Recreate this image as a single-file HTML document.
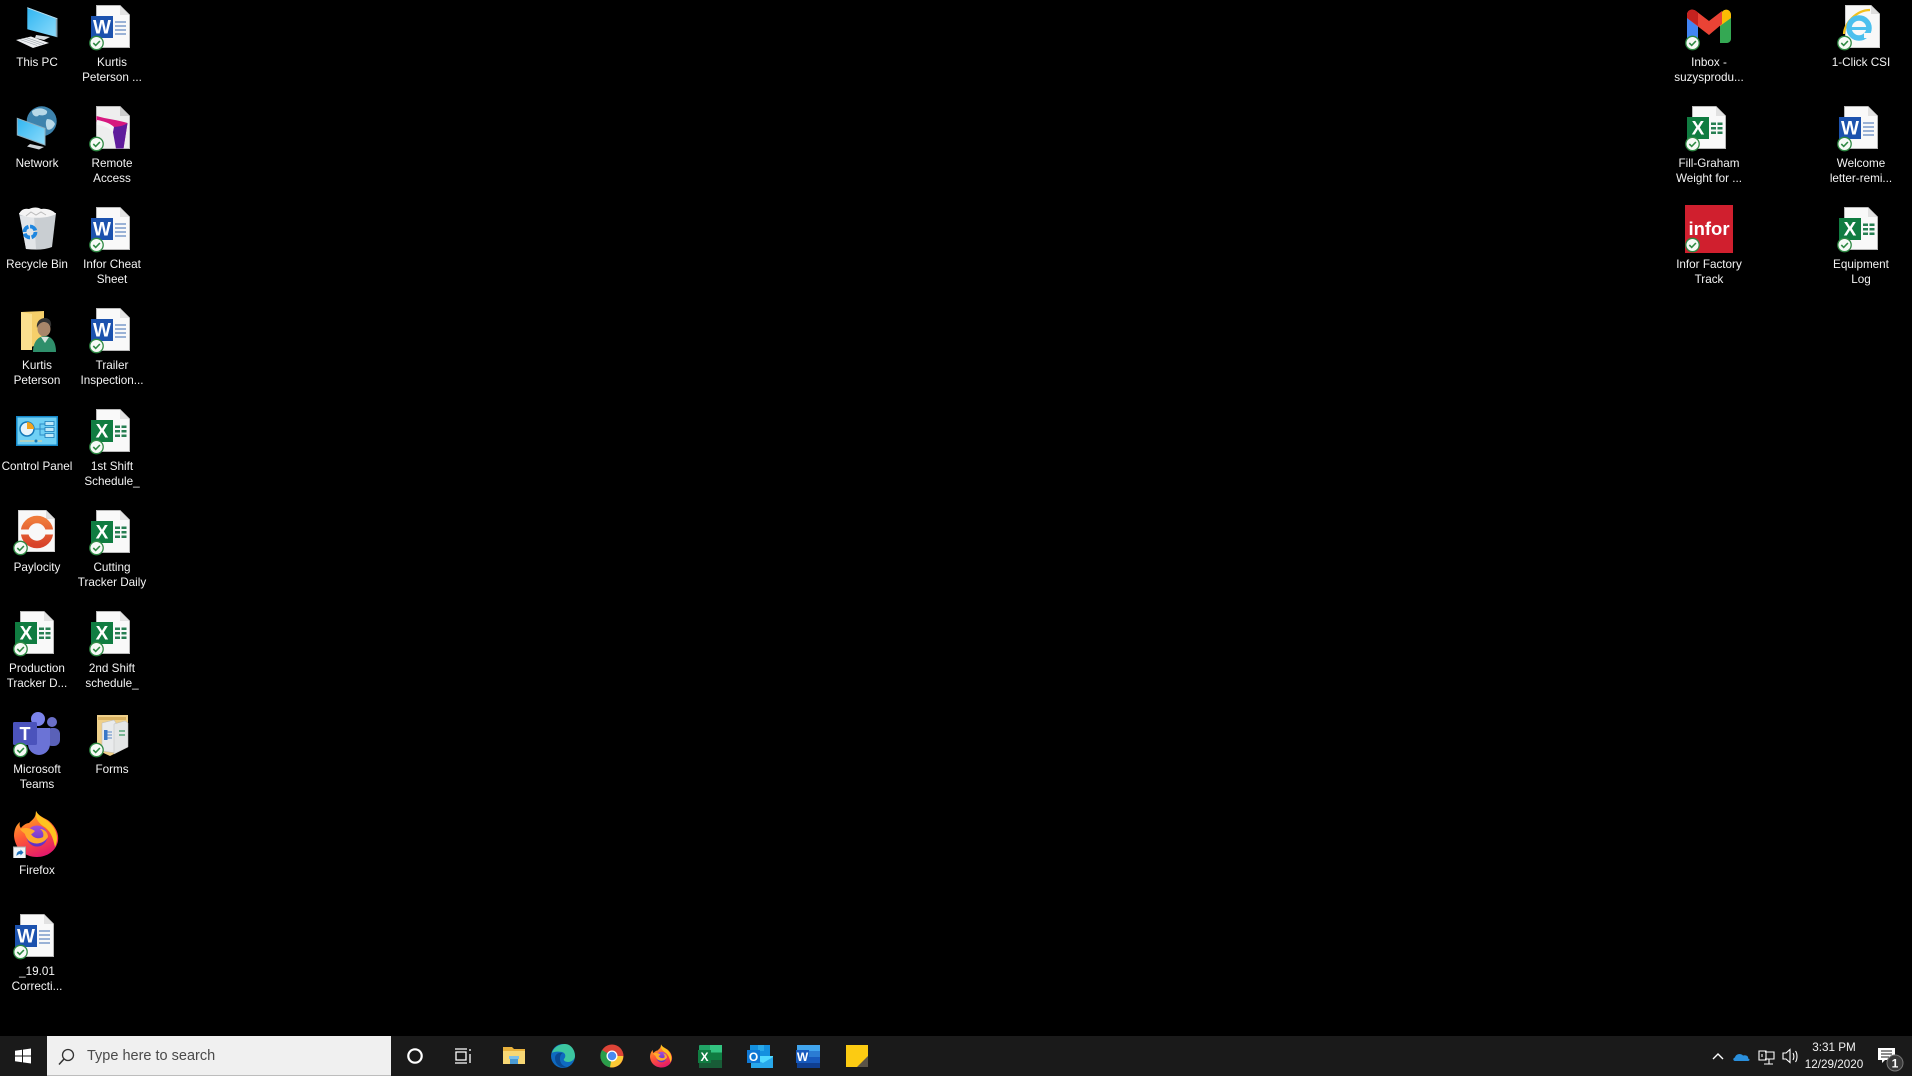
<!DOCTYPE html>
<html lang="en"><head><meta charset="utf-8"><title>Desktop</title>
<style>
html,body{margin:0;padding:0;width:1912px;height:1076px;background:#000;overflow:hidden;font-family:"Liberation Sans",sans-serif}
svg.a{position:absolute;left:0;top:0}
.l{position:absolute;width:76px;text-align:center;color:#f4f4f4;font-size:11.7px;line-height:15px;text-shadow:0 1px 2px #000;white-space:nowrap}
.tb{position:absolute;left:0;top:1036px;width:1912px;height:40px;background:#1a1a1a}
.sb{position:absolute;left:47px;top:1036px;width:344px;height:39px;background:#f0f0f0;border-bottom:1px solid #bdbdbd}
.st{position:absolute;left:87px;top:1047px;font-size:14.5px;line-height:19px;color:#4a4a4a;white-space:nowrap}
.ck{position:absolute;width:80px;text-align:center;color:#f2f2f2;font-size:11.7px;line-height:17px;white-space:nowrap}
</style></head><body>
<div class="tb"></div><div class="sb"></div>
<svg class="a" width="1912" height="1076" viewBox="0 0 1912 1076">
<defs>
<linearGradient id="sc" x1="0" y1="0" x2="1" y2="1"><stop offset="0" stop-color="#2fb5f2"/><stop offset="1" stop-color="#8fdcfb"/></linearGradient>
<linearGradient id="fx" x1="0.2" y1="0" x2="0.6" y2="1"><stop offset="0" stop-color="#ffb81f"/><stop offset=".5" stop-color="#ff5a35"/><stop offset="1" stop-color="#e3186c"/></linearGradient>
<linearGradient id="pu" x1="0" y1="0" x2="0" y2="1"><stop offset="0" stop-color="#a34fd8"/><stop offset="1" stop-color="#5a30c4"/></linearGradient>
<linearGradient id="ry" x1="0" y1="0" x2="0" y2="1"><stop offset="0" stop-color="#ef7a3a"/><stop offset="1" stop-color="#d8432a"/></linearGradient>
<symbol id="b" viewBox="0 0 48 48" overflow="visible"><circle cx="8.500" cy="41" r="6.700" fill="#f6faf6" stroke="#2f8a44" stroke-width="1.300"/><path d="M5.300 41l2.400 2.400 4.200-4.400" fill="none" stroke="#2f8a44" stroke-width="1.600"/></symbol>
<symbol id="p" viewBox="0 0 48 48"><path d="M8.500 3.500H32L41.500 13V45.500H8.500Z" fill="#f9f9f9" stroke="#b8b8b8"/><path d="M32 3.500L41.500 13H32Z" fill="#e2e2e2"/></symbol>
<symbol id="w" viewBox="0 0 48 48"><use href="#p" width="48" height="48"/><path d="M27 20H38M27 24H38M27 28H38M27 32H38" stroke="#3b6cb4" stroke-width="1"/><rect x="3" y="14" width="22" height="22" fill="#1c52ae"/><text x="14" y="31.500" font-size="19" font-weight="700" fill="#fff" text-anchor="middle" font-family="Liberation Sans">W</text></symbol>
<symbol id="x" viewBox="0 0 48 48"><use href="#p" width="48" height="48"/><path d="M27 19.500h5v2.500h-5zM33.500 19.500h5v2.500h-5zM27 24h5v2.500h-5zM33.500 24h5v2.500h-5zM27 28.500h5v2.500h-5zM33.500 28.500h5v2.500h-5z" fill="#277f52"/><rect x="3" y="14" width="22" height="22" fill="#107c41"/><text x="14" y="31.500" font-size="19" font-weight="700" fill="#fff" text-anchor="middle" font-family="Liberation Sans">X</text></symbol>
<symbol id="pc" viewBox="0 0 48 48"><path d="M15.300 5.300L45.300 16.300V35.300L15.300 27.300Z" fill="url(#sc)"/><path d="M45.300 16.300V35.300L43.800 34.900V16Z" fill="#8aa3b0"/><path d="M15.300 5.300L45.300 16.300 45.300 17.300 15.300 6.300Z" fill="#b9d8e6"/><path d="M24 33L38 35 32 38 23 36Z" fill="#d8dde0"/><path d="M4 38L19 34.500 37 41 21 46Z" fill="#eef0f2"/><path d="M8 37.500l17 6M11.500 36.600l17 6M15 35.800l17 6" stroke="#9aa2a8" stroke-width=".6"/></symbol>
<symbol id="net" viewBox="0 0 48 48"><circle cx="29.700" cy="18.300" r="15" fill="#3d83ad"/><path d="M20 8c5-4 12-3 15 0 1 4-4 5-8 4-2 3-7 1-7-4zM35 16c4 0 7 2 8 5-2 5-6 7-8 5-1-3-2-7 0-10z" fill="#b8d9e8"/><path d="M5.300 15.300L33 25.300V42L5.300 32Z" fill="url(#sc)" stroke="#8fb0c0"/><path d="M18 41l14 3-5 2.500-12-3z" fill="#cfd4d8"/></symbol>
<symbol id="bin" viewBox="0 0 48 48"><path d="M7 9L44 9 40 43Q30 47 14 45Z" fill="#c9ced2"/><path d="M14 45H24L22 12H8Z" fill="#e2e5e8"/><path d="M7 10c2-4 5-6 10-5 4-2 9-2 12 0 5-1 12 1 15 5-9 5-28 5-37 0z" fill="#f4f4f4"/><path d="M14 12l5-4 5 3 5-3 5 3" stroke="#bbb" fill="none"/><circle cx="18" cy="28" r="5.500" fill="none" stroke="#1e86df" stroke-width="3.800" stroke-dasharray="7 1.600"/></symbol>
<symbol id="fo" viewBox="0 0 48 48"><path d="M9 7L32 6V38L9 45Z" fill="#f5cf6a"/><path d="M9 7L20 9V45H9Z" fill="#fbe08f"/><path d="M21 47c0-11 6-16 12-16s11 5 11 16z" fill="#2f8f6b"/><path d="M29 32l4 6 4-6z" fill="#d8e8e0"/><ellipse cx="32" cy="24" rx="6.500" ry="7.500" fill="#a8866a"/><path d="M25 23c-1-7 4-10 8-10s7 3 6 9c-2-4-5-5-7-5s-5 1-7 6z" fill="#333"/></symbol>
<symbol id="cp" viewBox="0 0 48 48"><rect x="4" y="10" width="42" height="30" fill="#1487c8"/><rect x="5.500" y="11.500" width="39" height="27" fill="#6fd0f5"/><circle cx="15" cy="23" r="7" fill="#e9f4fb" stroke="#1478b8" stroke-width="1.500"/><path d="M15 23V16a7 7 0 0 1 7 7z" fill="#f2a31e"/><path d="M22 23h6v-5h5M28 23h5M28 23v6h5" stroke="#2b8cc6" fill="none"/><path d="M8 35h22" stroke="#f0d08a"/><path d="M33 15.500h9v4h-9zM33 21.500h9v4h-9zM33 27.500h9v4h-9z" fill="#bfe8f8" stroke="#1478b8" stroke-width=".8"/><circle cx="24" cy="35" r="1.500" fill="#1478b8"/></symbol>
<symbol id="pay" viewBox="0 0 48 48"><path d="M6.500 3.500H34L42.500 12V44.500H6.500Z" fill="#f8f8f8" stroke="#ccc"/><path d="M34 3.500L42.500 12H34Z" fill="#ddd"/><circle cx="25" cy="25" r="12.500" fill="none" stroke="url(#ry)" stroke-width="7.500"/><path d="M8 22.500h10l2 3-2 2H8zM42 22.500H32l-2 3 2 2h10z" fill="#f8f8f8"/></symbol>
<symbol id="rem" viewBox="0 0 48 48"><path d="M8.500 3.500H32L41.500 13V45.500H8.500Z" fill="#eeeeee" stroke="#b8b8b8"/><path d="M32 3.500L41.500 13H32Z" fill="#ccc"/><path d="M8.500 13c10 3 22 4 31 7l-4 25.500H28l-2-21c-5-3-11-5-17.500-6z" fill="#d7187f"/><path d="M24 24c5 0 12-1 15.500-4l-4 25.500H28z" fill="#5f1c9c"/><path d="M9 17c6 1 13 3 17 7l-1 5c-4-4-10-7-16-7z" fill="#f5f5f5"/></symbol>
<symbol id="te" viewBox="0 0 48 48"><circle cx="40" cy="13" r="5" fill="#6a6fc8"/><rect x="34" y="19" width="14" height="18" rx="6" fill="#5a61b8"/><circle cx="26" cy="10" r="7" fill="#7b83eb"/><path d="M16 19H38V35A11 11 0 0 1 16 35Z" fill="#6b73d6"/><rect x="1" y="13" width="24" height="23" rx="1.500" fill="#4b53bc"/><text x="13" y="31" font-size="18" font-weight="700" fill="#fff" text-anchor="middle" font-family="Liberation Sans">T</text></symbol>
<symbol id="ff" viewBox="0 0 48 48"><path d="M24 1c2 5 9 7 13 10 7 6 10 13 9 20-2 10-11 16-21 16C12 47 3 38 2 26c0-6 2-11 6-14-1 3 0 5 1 6 2-3 6-5 8-5 3-3 7-5 7-12z" fill="url(#fx)"/><path d="M24 1c3 6 10 8 14 12 7 7 9 16 5 24-2-10-5-17-12-21-4-3-8-7-7-15z" fill="#ffc21f"/><circle cx="25" cy="26" r="10.500" fill="url(#pu)"/><path d="M8 19c5-2 11-1 15 2-2 2-3 3-4 3 3 5 9 5 12 3 1-3 0-6-3-8 5 0 8 4 8 8-5 8-15 8-20 3-2-3-3-5-3-6-2-2-4-3-5-5z" fill="#ffab2b"/></symbol>
<symbol id="sh" viewBox="0 0 48 48"><rect x="1.500" y="37" width="12" height="12" fill="#f0f4f8" stroke="#aaa"/><path d="M4.500 46c0-4 2-5 4-5v-1.500l3 3-3 3V44c-2 0-3 1-4 2z" fill="#1c6fb8"/></symbol>
<symbol id="fm" viewBox="0 0 48 48"><path d="M9 6H40V38L22 47 9 41Z" fill="#efd08a"/><path d="M10 8H38V11H10Z" fill="#d9b262"/><path d="M14 14l12-3 2 3v30l-14-2z" fill="#e9ebec" stroke="#bbb" stroke-width=".5"/><path d="M26 15l11-3 3 2v24l-14 7z" fill="#e4e6e6" stroke="#bbb" stroke-width=".5"/><path d="M19 23h5M19 26h5M19 29h5" stroke="#5a88c8" stroke-width="1"/><rect x="16" y="21" width="3.500" height="10" fill="#3a78c8"/><path d="M31 22h6M31 26h6" stroke="#3a9a65" stroke-width="1.300"/></symbol>
<symbol id="gm" viewBox="0 0 48 48"><path d="M3 13c0-5 6-7 9-3l2 2V41H7c-2 0-4-2-4-4z" fill="#4285f4"/><path d="M47 13c0-5-6-7-9-3l-2 2V41h7c2 0 4-2 4-4z" fill="#34a853"/><path d="M36 12l3-3c3-3 8-1 8 4v3l-11 8z" fill="#fbbc04"/><path d="M3 13c0-5 5-7 9-4l13 10 13-10c0 0 0 0 0 0V22L25 33 3 16z" fill="#ea4335"/><path d="M3 13c0-5 5-7 9-4l2 2V24L3 16z" fill="#c5221f"/></symbol>
<symbol id="ie" viewBox="0 0 48 48"><path d="M9.500 3.500H35L43.500 12V45.500H9.500Z" fill="#f8f8f8" stroke="#ccc"/><path d="M35 3.500L43.500 12H35Z" fill="#ddd"/><path d="M8 32C8 22 20 8 34 8" fill="none" stroke="#f3c11c" stroke-width="2.200"/><circle cx="23" cy="26" r="10" fill="none" stroke="#4cc0ee" stroke-width="5.500"/><path d="M14 25H33V28H14Z" fill="#4cc0ee"/><path d="M28 31h9v5h-9z" fill="#f8f8f8"/></symbol>
</defs>
<use href="#pc" x="12" y="2" width="48" height="48"/>
<use href="#net" x="12" y="103" width="48" height="48"/>
<use href="#bin" x="12" y="204" width="48" height="48"/>
<use href="#fo" x="12" y="305" width="48" height="48"/>
<use href="#cp" x="12" y="406" width="48" height="48"/>
<use href="#pay" x="12" y="507" width="48" height="48"/><use href="#b" x="12" y="507" width="48" height="48"/>
<use href="#x" x="12" y="608" width="48" height="48"/><use href="#b" x="12" y="608" width="48" height="48"/>
<use href="#te" x="12" y="709" width="48" height="48"/><use href="#b" x="12" y="709" width="48" height="48"/>
<use href="#ff" x="12" y="810" width="48" height="48"/><use href="#sh" x="12" y="810" width="48" height="48"/>
<use href="#w" x="12" y="911" width="48" height="48"/><use href="#b" x="12" y="911" width="48" height="48"/>
<use href="#w" x="88" y="2" width="48" height="48"/><use href="#b" x="88" y="2" width="48" height="48"/>
<use href="#rem" x="88" y="103" width="48" height="48"/><use href="#b" x="88" y="103" width="48" height="48"/>
<use href="#w" x="88" y="204" width="48" height="48"/><use href="#b" x="88" y="204" width="48" height="48"/>
<use href="#w" x="88" y="305" width="48" height="48"/><use href="#b" x="88" y="305" width="48" height="48"/>
<use href="#x" x="88" y="406" width="48" height="48"/><use href="#b" x="88" y="406" width="48" height="48"/>
<use href="#x" x="88" y="507" width="48" height="48"/><use href="#b" x="88" y="507" width="48" height="48"/>
<use href="#x" x="88" y="608" width="48" height="48"/><use href="#b" x="88" y="608" width="48" height="48"/>
<use href="#fm" x="88" y="709" width="48" height="48"/><use href="#b" x="88" y="709" width="48" height="48"/>
<use href="#gm" x="1684" y="2" width="48" height="48"/><use href="#b" x="1684" y="2" width="48" height="48"/>
<use href="#x" x="1684" y="103" width="48" height="48"/><use href="#b" x="1684" y="103" width="48" height="48"/>
<rect x="1685" y="205" width="48" height="48" fill="#d01f2e"/>
<text x="1709" y="235" font-size="18.500" font-weight="700" fill="#fff" text-anchor="middle" font-family="Liberation Sans">infor</text>
<use href="#b" x="1684" y="204" width="48" height="48"/>
<use href="#ie" x="1836" y="2" width="48" height="48"/><use href="#b" x="1836" y="2" width="48" height="48"/>
<use href="#w" x="1836" y="103" width="48" height="48"/><use href="#b" x="1836" y="103" width="48" height="48"/>
<use href="#x" x="1836" y="204" width="48" height="48"/><use href="#b" x="1836" y="204" width="48" height="48"/>

<!-- taskbar left -->
<path d="M15 1050.800l7-1v5.700h-7zM23 1049.600l8-1.100v7h-8zM15 1056.500h7v5.700l-7-1zM23 1056.500h8v7l-8-1.100z" fill="#fff"/>
<circle cx="68" cy="1055" r="5.500" fill="none" stroke="#333" stroke-width="1.300"/><path d="M64 1059l-5 5.500" stroke="#333" stroke-width="1.500"/>
<circle cx="415" cy="1056" r="6.700" fill="none" stroke="#fff" stroke-width="2.200"/>
<path d="M456 1052h10v8h-10zM455 1049h12M455 1063h12M470 1049v2M470 1054v9" fill="none" stroke="#fff" stroke-width="1.300"/>
<!-- explorer -->
<path d="M503 1047h9l2 2h11v3h-22z" fill="#e8b13c"/><path d="M503 1051h22v13h-22z" fill="#f7d774"/><path d="M510 1058h8v6h-8z" fill="#4a9bd4"/><path d="M509 1056h10v3h-10z" fill="#7cc0ea"/>
<!-- edge -->
<circle cx="563" cy="1056" r="12" fill="#0f6ac0"/><path d="M552 1053c2-7 9-9 13-9 6 0 10 6 10 12 0 3-3 6-7 6-3 0-5-2-4-3 2-2 2-6-2-7-5-1-9 0-10 1z" fill="#3cc6a0"/><path d="M555 1058c0-4 4-6 8-5-3 1-4 6-2 10 1 2 4 4 6 4-7 2-12-3-12-9z" fill="#0a4a94"/>
<!-- chrome -->
<circle cx="612" cy="1056" r="11.500" fill="#dd4437"/><path d="M612 1056L602 1050A11.500 11.500 0 0 0 610 1067.300L616 1056Z" fill="#2a9d4a"/><path d="M612 1056h11.300A11.500 11.500 0 0 1 610 1067.300Z" fill="#fcc934"/><circle cx="612" cy="1056" r="5.500" fill="#fff"/><circle cx="612" cy="1056" r="4.200" fill="#4a8af0"/>
<!-- firefox -->
<use href="#ff" x="649" y="1044" width="24" height="24"/>
<!-- excel -->
<rect x="699" y="1045" width="23" height="23" rx="1" fill="#21a366"/><rect x="710" y="1045" width="12" height="7.500" fill="#33c481"/><rect x="699" y="1060" width="23" height="8" fill="#185c37"/><rect x="710" y="1052.500" width="12" height="7.500" fill="#107c41"/><rect x="698" y="1050" width="13" height="13" fill="#107c41"/><text x="704.500" y="1061" font-size="12" font-weight="700" fill="#fff" text-anchor="middle" font-family="Liberation Sans">X</text>
<!-- outlook -->
<rect x="750" y="1045" width="20" height="13" fill="#1490df"/><rect x="758" y="1045" width="6" height="6" fill="#28a8ea"/><path d="M751 1057h22v11h-22z" fill="#28a8ea"/><path d="M751 1057l12 6 10-6v-1h-22z" fill="#50d9ff"/><rect x="747" y="1050" width="13" height="13" fill="#0f78d4"/><text x="753.500" y="1061" font-size="12" font-weight="700" fill="#fff" text-anchor="middle" font-family="Liberation Sans">O</text>
<!-- word -->
<rect x="797" y="1045" width="23" height="23" rx="1" fill="#2b7cd3"/><rect x="797" y="1045" width="23" height="6" fill="#41a5ee"/><rect x="797" y="1057" width="23" height="6" fill="#185abd"/><rect x="797" y="1063" width="23" height="5" fill="#103f91"/><rect x="796" y="1050" width="13" height="13" fill="#185abd"/><text x="802.500" y="1061" font-size="12" font-weight="700" fill="#fff" text-anchor="middle" font-family="Liberation Sans">W</text>
<!-- sticky -->
<rect x="846" y="1045" width="22" height="22" fill="#fccb12"/><path d="M857 1067L868 1056V1067Z" fill="#5a5347"/>
<!-- tray -->
<path d="M1713 1059l5-5 5 5" fill="none" stroke="#fff" stroke-width="1.400"/>
<path d="M1735 1061c-2 0-2.500-3 0-3.500 .5-3 5-5 8-2 3-1 6 1 5 3 2 0 2 2.500 0 2.500z" fill="#2a8fdc"/>
<path d="M1759 1051h7v9h-7zM1765 1052h9v7h-9M1769 1059v5M1764 1064h9M1762 1054v3" fill="none" stroke="#fff" stroke-width="1.100"/>
<path d="M1783 1053h3l4-3.500v13l-4-3.500h-3z" fill="none" stroke="#fff" stroke-width="1.100"/><path d="M1793 1053c1.200 2 1.200 5 0 7M1795.500 1051c2 3 2 8 0 11" fill="none" stroke="#fff" stroke-width="1.100"/>
<path d="M1878 1048h17v12h-10l-3 3v-3h-4z" fill="#fff"/><path d="M1881 1051h11M1881 1054h11M1881 1057h8" stroke="#1a1a1a" stroke-width="1"/>
<circle cx="1895" cy="1063" r="8" fill="#3a3a3a" stroke="#777"/>
<text x="1895" y="1067.500" font-size="12" font-weight="700" fill="#fff" text-anchor="middle" font-family="Liberation Sans">1</text>
</svg>
<div class="st">Type here to search</div>
<div class="ck" style="left:1794px;top:1039px">3:31 PM</div>
<div class="ck" style="left:1794px;top:1056px">12/29/2020</div>

<div class="l" style="left:-1px;top:55px">This PC</div>
<div class="l" style="left:-1px;top:156px">Network</div>
<div class="l" style="left:-1px;top:257px">Recycle Bin</div>
<div class="l" style="left:-1px;top:358px">Kurtis<br>Peterson</div>
<div class="l" style="left:-1px;top:459px">Control Panel</div>
<div class="l" style="left:-1px;top:560px">Paylocity</div>
<div class="l" style="left:-1px;top:661px">Production<br>Tracker D...</div>
<div class="l" style="left:-1px;top:762px">Microsoft<br>Teams</div>
<div class="l" style="left:-1px;top:863px">Firefox</div>
<div class="l" style="left:-1px;top:964px">_19.01<br>Correcti...</div>
<div class="l" style="left:74px;top:55px">Kurtis<br>Peterson ...</div>
<div class="l" style="left:74px;top:156px">Remote<br>Access</div>
<div class="l" style="left:74px;top:257px">Infor Cheat<br>Sheet</div>
<div class="l" style="left:74px;top:358px">Trailer<br>Inspection...</div>
<div class="l" style="left:74px;top:459px">1st Shift<br>Schedule_</div>
<div class="l" style="left:74px;top:560px">Cutting<br>Tracker Daily</div>
<div class="l" style="left:74px;top:661px">2nd Shift<br>schedule_</div>
<div class="l" style="left:74px;top:762px">Forms</div>
<div class="l" style="left:1671px;top:55px">Inbox -<br>suzysprodu...</div>
<div class="l" style="left:1671px;top:156px">Fill-Graham<br>Weight for ...</div>
<div class="l" style="left:1671px;top:257px">Infor Factory<br>Track</div>
<div class="l" style="left:1823px;top:55px">1-Click CSI</div>
<div class="l" style="left:1823px;top:156px">Welcome<br>letter-remi...</div>
<div class="l" style="left:1823px;top:257px">Equipment<br>Log</div>
</body></html>
